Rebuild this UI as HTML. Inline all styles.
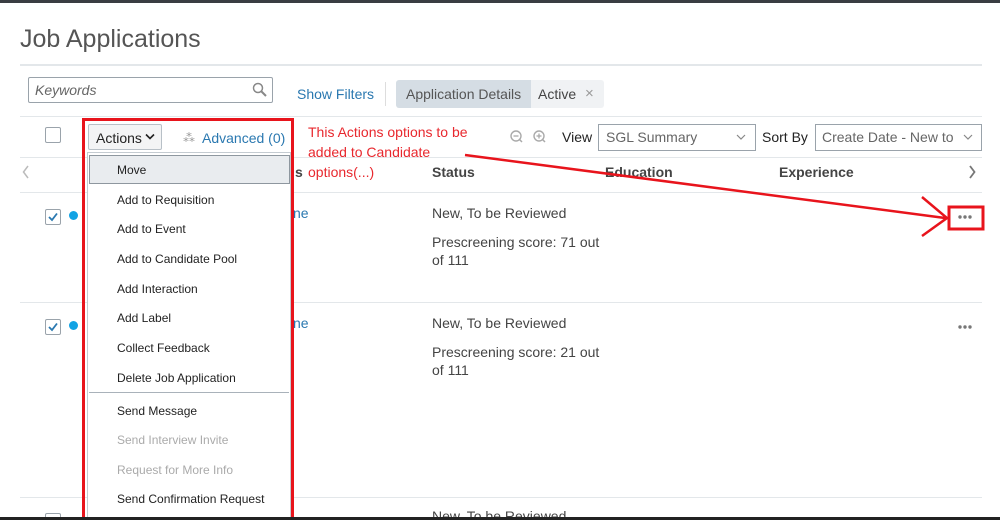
<!DOCTYPE html>
<html style="width:1000px;height:520px;overflow:hidden"><head><meta charset="utf-8"><style>
*{box-sizing:border-box;margin:0;padding:0}
body{width:1000px;height:520px;overflow:hidden;background:#fff;font-family:"Liberation Sans",sans-serif;position:relative;color:#333}
.a{position:absolute;white-space:nowrap}
.hl{position:absolute;height:1px;background:#e3e7ea}
.mi{position:absolute;left:117px;font-size:12px;color:#222}
.st{font-size:14px;color:#444}
.cb{position:absolute;width:16px;height:16px;border:1px solid #9aa3ab;border-radius:2px;background:#fff}
</style></head><body>
<div class="a" style="left:0;top:0;width:1000px;height:3px;background:#3a3d42"></div>
<div class="a" style="left:20px;top:25px;font-size:25px;color:#555">Job Applications</div>
<div class="hl" style="left:20px;top:64px;width:962px;height:2px"></div>
<div class="a" style="left:28px;top:77px;width:245px;height:26px;border:1px solid #9aa3ab;border-radius:2px"></div>
<div class="a" style="left:35px;top:82px;font-size:14px;font-style:italic;color:#666">Keywords</div>
<svg class="a" style="left:252px;top:82px" width="16" height="16"><circle cx="6" cy="6" r="4.5" fill="none" stroke="#888" stroke-width="1.5"/><line x1="9.5" y1="9.5" x2="14" y2="14" stroke="#888" stroke-width="2"/></svg>
<div class="a" style="left:297px;top:86px;font-size:14px;color:#2a78b0">Show Filters</div>
<div class="a" style="left:385px;top:82px;width:1px;height:24px;background:#ddd"></div>
<div class="a" style="left:396px;top:80px;width:135px;height:28px;background:#d5dde4;border-radius:3px 0 0 3px"></div>
<div class="a" style="left:531px;top:80px;width:73px;height:28px;background:#f0f2f4;border-radius:0 3px 3px 0"></div>
<div class="a" style="left:406px;top:86px;font-size:14px;color:#555">Application Details</div>
<div class="a" style="left:538px;top:86px;font-size:14px;color:#444">Active</div>
<div class="a" style="left:585px;top:85px;font-size:15px;color:#999">×</div>
<div class="hl" style="left:20px;top:116px;width:962px"></div>
<div class="cb" style="left:45px;top:127px"></div>
<div class="a" style="left:88px;top:124px;width:74px;height:26px;border:1px solid #b8c0c7;border-radius:2px;background:#f3f4f5"></div>
<div class="a" style="left:96px;top:130px;font-size:14px;color:#222">Actions</div>
<svg class="a" style="left:145px;top:133px" width="10" height="8"><path d="M1 1.5L5 5.5L9 1.5" fill="none" stroke="#222" stroke-width="1.6"/></svg>
<div class="a" style="left:183px;top:131px;font-size:12px;color:#999">⁂</div>
<div class="a" style="left:202px;top:130px;font-size:14px;color:#2a78b0">Advanced (0)</div>
<div class="a" style="left:308px;top:122px;font-size:14px;color:#e8282e;line-height:20px;white-space:normal;width:190px">This Actions options to be added to Candidate options(...)</div>
<svg class="a" style="left:508px;top:128px" width="44" height="18"><circle cx="8" cy="8" r="5" fill="none" stroke="#aaa" stroke-width="1.4"/><line x1="5.5" y1="8" x2="10.5" y2="8" stroke="#aaa" stroke-width="1.3"/><line x1="11.5" y1="11.5" x2="14" y2="14" stroke="#aaa" stroke-width="1.5"/><circle cx="31" cy="8" r="5" fill="none" stroke="#aaa" stroke-width="1.4"/><line x1="28.5" y1="8" x2="33.5" y2="8" stroke="#aaa" stroke-width="1.3"/><line x1="31" y1="5.5" x2="31" y2="10.5" stroke="#aaa" stroke-width="1.3"/><line x1="34.5" y1="11.5" x2="37" y2="14" stroke="#aaa" stroke-width="1.5"/></svg>
<div class="a" style="left:562px;top:129px;font-size:14px;color:#222">View</div>
<div class="a" style="left:598px;top:124px;width:158px;height:27px;border:1px solid #9aa3ab"></div>
<div class="a" style="left:606px;top:129px;font-size:14px;color:#666">SGL Summary</div>
<svg class="a" style="left:736px;top:134px" width="10" height="7"><path d="M1 1L5 5L9 1" fill="none" stroke="#888" stroke-width="1.2"/></svg>
<div class="a" style="left:762px;top:129px;font-size:14px;color:#222">Sort By</div>
<div class="a" style="left:815px;top:124px;width:167px;height:27px;border:1px solid #9aa3ab"></div>
<div class="a" style="left:822px;top:129px;font-size:14px;color:#666">Create Date - New to</div>
<svg class="a" style="left:963px;top:134px" width="10" height="7"><path d="M1 1L5 5L9 1" fill="none" stroke="#888" stroke-width="1.2"/></svg>
<div class="hl" style="left:20px;top:157px;width:962px"></div>
<svg class="a" style="left:22px;top:165px" width="8" height="14"><path d="M6 1L1.5 7L6 13" fill="none" stroke="#bbb" stroke-width="1.5"/></svg>
<div class="a" style="left:295px;top:164px;font-size:14px;font-weight:bold;color:#444">s</div>
<div class="a" style="left:432px;top:164px;font-size:14px;font-weight:bold;color:#444">Status</div>
<div class="a" style="left:605px;top:164px;font-size:14px;font-weight:bold;color:#444">Education</div>
<div class="a" style="left:779px;top:164px;font-size:14px;font-weight:bold;color:#444">Experience</div>
<svg class="a" style="left:968px;top:165px" width="8" height="14"><path d="M2 1L6.5 7L2 13" fill="none" stroke="#777" stroke-width="1.8"/></svg>
<div class="hl" style="left:20px;top:192px;width:962px"></div>
<!-- rows -->
<div class="cb" style="left:45px;top:209px"></div><svg class="a" style="left:47px;top:211px" width="12" height="12"><path d="M2 6L5 9L10 2.5" fill="none" stroke="#2a78b0" stroke-width="1.8"/></svg>
<div class="a" style="left:69px;top:211px;width:9px;height:9px;border-radius:50%;background:#13a3e4"></div>
<div class="a" style="left:293px;top:205px;font-size:14px;color:#2a78b0">ne</div>
<div class="a st" style="left:432px;top:205px">New, To be Reviewed</div>
<div class="a st" style="left:432px;top:234px">Prescreening score: 71 out</div>
<div class="a st" style="left:432px;top:252px">of 111</div>
<svg class="a" style="left:957px;top:214px" width="16" height="6"><circle cx="3" cy="3" r="1.7" fill="#777"/><circle cx="8" cy="3" r="1.7" fill="#777"/><circle cx="13" cy="3" r="1.7" fill="#777"/></svg>
<div class="hl" style="left:20px;top:302px;width:962px"></div>
<div class="cb" style="left:45px;top:319px"></div><svg class="a" style="left:47px;top:321px" width="12" height="12"><path d="M2 6L5 9L10 2.5" fill="none" stroke="#2a78b0" stroke-width="1.8"/></svg>
<div class="a" style="left:69px;top:321px;width:9px;height:9px;border-radius:50%;background:#13a3e4"></div>
<div class="a" style="left:293px;top:315px;font-size:14px;color:#2a78b0">ne</div>
<div class="a st" style="left:432px;top:315px">New, To be Reviewed</div>
<div class="a st" style="left:432px;top:344px">Prescreening score: 21 out</div>
<div class="a st" style="left:432px;top:362px">of 111</div>
<svg class="a" style="left:957px;top:324px" width="16" height="6"><circle cx="3" cy="3" r="1.7" fill="#777"/><circle cx="8" cy="3" r="1.7" fill="#777"/><circle cx="13" cy="3" r="1.7" fill="#777"/></svg>
<div class="hl" style="left:20px;top:497px;width:962px"></div>
<div class="cb" style="left:45px;top:513px"></div>
<div class="a st" style="left:432px;top:508px">New, To be Reviewed</div>
<!-- menu -->
<div class="a" style="left:87px;top:152px;width:204px;height:368px;background:#fff;border:1px solid #c4cbd1"></div>
<div class="a" style="left:89px;top:155px;width:201px;height:29px;background:#e9ecef;border:1px solid #8e979f"></div>
<div class="mi" style="top:163px">Move</div>
<div class="mi" style="top:193px">Add to Requisition</div>
<div class="mi" style="top:222px">Add to Event</div>
<div class="mi" style="top:252px">Add to Candidate Pool</div>
<div class="mi" style="top:282px">Add Interaction</div>
<div class="mi" style="top:311px">Add Label</div>
<div class="mi" style="top:341px">Collect Feedback</div>
<div class="mi" style="top:371px">Delete Job Application</div>
<div class="a" style="left:89px;top:392px;width:200px;height:1px;background:#a9b2ba"></div>
<div class="mi" style="top:404px">Send Message</div>
<div class="mi" style="top:433px;color:#aaa">Send Interview Invite</div>
<div class="mi" style="top:463px;color:#aaa">Request for More Info</div>
<div class="mi" style="top:492px">Send Confirmation Request</div>
<!-- annotations -->
<div class="a" style="left:82px;top:118px;width:212px;height:410px;border:3px solid #e8141c"></div>
<svg class="a" style="left:0;top:0" width="1000" height="520"><path d="M465 155L945 218M922 197L947 218L922 236" fill="none" stroke="#e8141c" stroke-width="2.5"/><rect x="949" y="207" width="34" height="22" fill="none" stroke="#e8141c" stroke-width="3"/></svg>
<div class="a" style="left:0;top:517px;width:1000px;height:3px;background:#222"></div>
</body></html>
